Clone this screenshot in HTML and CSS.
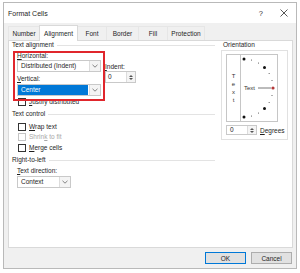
FILE: index.html
```html
<!DOCTYPE html>
<html lang="en">
<head>
    <meta charset="UTF-8">
    <title>Format Cells</title>
    <link rel="stylesheet" href="styles.css">
</head>
<body>
    <div class="dialog">
        <div class="titlebar">
            <span class="title">Format Cells</span>
            <div class="tb-btns">
                <span class="help">?</span>
                <svg class="close" width="8" height="8" viewBox="0 0 8 8"><path d="M0.5 0.5L7.5 7.5M7.5 0.5L0.5 7.5" stroke="#444" stroke-width="0.9"/></svg>
            </div>
        </div>
        <div class="dlg-body">
            <!-- Abas -->
            <div class="tabs">
                <div class="tab w-number">Number</div>
                <div class="tab active w-align">Alignment</div>
                <div class="tab w-font">Font</div>
                <div class="tab w-border">Border</div>
                <div class="tab w-fill">Fill</div>
                <div class="tab w-prot">Protection</div>
            </div>
            <div class="panel">
                <div class="left-col">
                    <div class="group-head"><span>Text alignment</span></div>
                    <div class="align-row">
                        <div class="hv">
                            <div class="lbl"><u>H</u>orizontal:</div>
                            <div class="combo">
                                <span class="combo-text">Distributed (Indent)</span>
                                <span class="combo-btn"><svg width="6" height="4" viewBox="0 0 6 4"><path d="M0.5 0.8L3 3.2L5.5 0.8" fill="none" stroke="#666" stroke-width="0.8"/></svg></span>
                            </div>
                            <div class="lbl lbl-v"><u>V</u>ertical:</div>
                            <div class="combo combo-v">
                                <span class="combo-text selected">Center</span>
                                <span class="combo-btn"><svg width="6" height="4" viewBox="0 0 6 4"><path d="M0.5 0.8L3 3.2L5.5 0.8" fill="none" stroke="#666" stroke-width="0.8"/></svg></span>
                            </div>
                        </div>
                        <div class="indent">
                            <div class="lbl"><u>I</u>ndent:</div>
                            <div class="spin">
                                <span class="spin-val">0</span>
                                <span class="spin-btn"><span class="up"></span><span class="down"></span></span>
                            </div>
                        </div>
                    </div>
                    <div class="check check-justify"><span class="box"></span><span><u>J</u>ustify distributed</span></div>

                    <div class="group-head gh-control"><span>Text control</span></div>
                    <div class="check check-wrap"><span class="box"></span><span><u>W</u>rap text</span></div>
                    <div class="check check-shrink disabled"><span class="box"></span><span>Shrin<u>k</u> to fit</span></div>
                    <div class="check check-merge"><span class="box"></span><span><u>M</u>erge cells</span></div>

                    <div class="group-head gh-rtl"><span>Right-to-left</span></div>
                    <div class="lbl lbl-dir"><u>T</u>ext direction:</div>
                    <div class="combo combo-ctx">
                        <span class="combo-text">Context</span>
                        <span class="combo-btn"><svg width="6" height="4" viewBox="0 0 6 4"><path d="M0.5 0.8L3 3.2L5.5 0.8" fill="none" stroke="#666" stroke-width="0.8"/></svg></span>
                    </div>
                </div>

                <div class="right-col">
                    <div class="orient-head">Orientation</div>
                    <div class="orient-box">
                        <div class="orient-row">
                            <div class="vtext">
                                <span>T</span><span>e</span><span>x</span><span>t</span>
                            </div>
                            <div class="dial">
                                <svg width="35" height="66" viewBox="0 0 35 66">
                                    <circle cx="2" cy="4" r="1.5" fill="#111"/>
                                    <circle cx="9.5" cy="5" r="0.5" fill="#333"/>
                                    <circle cx="16.5" cy="7.9" r="0.5" fill="#333"/>
                                    <circle cx="22.5" cy="12.5" r="1.5" fill="#111"/>
                                    <circle cx="27.1" cy="18.5" r="0.5" fill="#333"/>
                                    <circle cx="30" cy="25.5" r="0.5" fill="#333"/>
                                    <circle cx="31" cy="33" r="1.6" fill="#b5393a"/>
                                    <circle cx="30" cy="40.5" r="0.5" fill="#333"/>
                                    <circle cx="27.1" cy="47.5" r="0.5" fill="#333"/>
                                    <circle cx="22.5" cy="53.5" r="1.5" fill="#111"/>
                                    <circle cx="16.5" cy="58.1" r="0.5" fill="#333"/>
                                    <circle cx="9.5" cy="61" r="0.5" fill="#333"/>
                                    <circle cx="2" cy="62" r="1.5" fill="#111"/>
                                    <text x="2" y="35" class="dial-text">Text</text>
                                    <line x1="16" y1="33" x2="29" y2="33" stroke="#555" stroke-width="0.8"/>
                                </svg>
                            </div>
                        </div>
                        <div class="deg-row">
                            <div class="spin spin-deg">
                                <span class="spin-val">0</span>
                                <span class="spin-btn"><span class="up"></span><span class="down"></span></span>
                            </div>
                            <span class="deg-lbl"><u>D</u>egrees</span>
                        </div>
                    </div>
                </div>

                <!-- destaque vermelho -->
                <div class="redbox"></div>
            </div>
            <div class="footer">
                <button class="btn btn-ok">OK</button>
                <button class="btn">Cancel</button>
            </div>
        </div>
    </div>
</body>
</html>
```

FILE: styles.css
```css
/* Estilos gerais */
body {
    margin: 0;
    background: #fff;
    font-family: "Liberation Sans", Arial, sans-serif;
    font-size: 6.5px;
    color: #1e1e1e;
}
u {
    text-decoration-thickness: 0.5px;
    text-underline-offset: 1px;
}
.dialog {
    margin: 2px 0 0 3px;
    width: 294px;
    height: 267px;
    box-sizing: border-box;
    border: 1px solid #b9b9b9;
    display: flex;
    flex-direction: column;
}
.titlebar {
    height: 20px;
    background: #fff;
    display: flex;
    align-items: center;
    justify-content: space-between;
    padding: 0 8px 0 4px;
}
.title {
    font-size: 7px;
}
.tb-btns {
    display: flex;
    align-items: center;
    gap: 17px;
}
.help {
    font-size: 7.5px;
    color: #333;
}
.dlg-body {
    flex: 1;
    background: #f0f0f0;
    padding: 0 3px 0 4px;
    display: flex;
    flex-direction: column;
}
/* Abas */
.tabs {
    display: flex;
    align-items: flex-end;
    height: 17px;
}
.tab {
    height: 14px;
    box-sizing: border-box;
    border: 1px solid #e6e6e6;
    border-bottom: none;
    margin-left: -1px;
    display: flex;
    align-items: center;
    justify-content: center;
    background: #f0f0f0;
}
.tab:first-child {
    margin-left: 0;
}
.tab.active {
    height: 16px;
    background: #fff;
    border-color: #d9d9d9;
    margin-bottom: -1px;
    position: relative;
    z-index: 1;
}
.w-number { width: 32px; }
.w-align { width: 39px; }
.w-font { width: 30px; }
.w-border { width: 33px; }
.w-fill { width: 30px; }
.w-prot { width: 38px; }
/* Painel */
.panel {
    height: 208px;
    box-sizing: border-box;
    background: #fff;
    border: 1px solid #d9d9d9;
    display: flex;
    padding: 0 0 0 3px;
    position: relative;
}
.left-col {
    width: 203px;
    display: flex;
    flex-direction: column;
}
.group-head {
    height: 8px;
    line-height: 8px;
    display: flex;
    align-items: center;
    gap: 3px;
}
.group-head::after {
    content: "";
    flex: 1;
    border-top: 1px solid #e3e3e3;
}
.gh-control { margin-top: 4px; }
.gh-rtl { margin-top: 4px; }
.lbl {
    height: 9px;
    line-height: 9px;
}
.align-row {
    display: flex;
    margin-top: 2px;
    margin-left: 5px;
}
.hv {
    width: 84px;
    display: flex;
    flex-direction: column;
}
.lbl-v { margin-top: 2px; }
.combo {
    height: 12px;
    box-sizing: border-box;
    border: 1px solid #c9c9c9;
    background: #fff;
    display: flex;
    align-items: stretch;
}
.combo-v { margin-top: 1px; }
.combo-text {
    flex: 1;
    line-height: 10px;
    padding-left: 3px;
}
.combo-text.selected {
    background: #0078d7;
    color: #fff;
    margin: 0 1px 0 0;
}
.combo-btn {
    width: 10px;
    border-left: 1px solid #dcdcdc;
    background: #f4f4f4;
    display: flex;
    align-items: center;
    justify-content: center;
}
.indent {
    margin-left: 4px;
    margin-top: 11px;
}
.spin {
    width: 31px;
    height: 12px;
    box-sizing: border-box;
    border: 1px solid #c9c9c9;
    display: flex;
    background: #fff;
}
.spin-val {
    flex: 1;
    line-height: 10px;
    padding-left: 2px;
}
.spin-btn {
    width: 8px;
    border-left: 1px solid #dcdcdc;
    background: #f4f4f4;
    display: flex;
    flex-direction: column;
    align-items: center;
    justify-content: center;
    gap: 1px;
}
.up, .down {
    width: 0;
    height: 0;
    border-left: 2px solid transparent;
    border-right: 2px solid transparent;
}
.up { border-bottom: 2px solid #555; }
.down { border-top: 2px solid #555; }
/* Caixas de seleção */
.check {
    height: 9px;
    display: flex;
    align-items: center;
    gap: 3px;
    margin-left: 6px;
}
.box {
    width: 8px;
    height: 8px;
    box-sizing: border-box;
    border: 1px solid #333;
    background: #fff;
}
.check-justify { margin-top: 1px; }
.check-wrap { margin-top: 4px; }
.check-shrink { margin-top: 1px; }
.check-merge { margin-top: 2px; }
.disabled { color: #a8a8a8; }
.disabled .box { border-color: #c4c4c4; }
.lbl-dir { margin-top: 2px; margin-left: 5px; }
.combo-ctx {
    width: 54px;
    margin-top: 1px;
    margin-left: 5px;
}
/* Orientação */
.right-col {
    margin-left: 6px;
    width: 67px;
}
.orient-head {
    height: 8px;
    line-height: 8px;
    padding-left: 2px;
}
.orient-box {
    height: 90px;
    box-sizing: border-box;
    border: 1px solid #e1e1e1;
    margin-top: 1px;
    padding: 3px 0 0 4px;
}
.orient-row {
    display: flex;
}
.vtext {
    width: 15px;
    height: 68px;
    box-sizing: border-box;
    border: 1px solid #c6c6c6;
    display: flex;
    flex-direction: column;
    align-items: center;
    justify-content: center;
    font-size: 6px;
    line-height: 8px;
    color: #333;
}
.dial {
    width: 37px;
    height: 68px;
    box-sizing: border-box;
    border: 1px solid #c6c6c6;
    border-left: none;
}
.dial svg {
    display: block;
    margin-left: 1px;
}
.dial-text {
    font-family: "Liberation Sans", Arial, sans-serif;
    font-size: 6px;
    fill: #333;
}
.deg-row {
    display: flex;
    align-items: center;
    margin-top: 3px;
    gap: 3px;
}
.spin-deg {
    height: 10px;
}
.spin-deg .spin-val {
    line-height: 8px;
    padding-left: 3px;
}
/* Destaque */
.redbox {
    position: absolute;
    left: 4px;
    top: 10px;
    width: 92px;
    height: 50px;
    box-sizing: border-box;
    border: 2px solid #e0262c;
}
/* Rodapé */
.footer {
    flex: 1;
    display: flex;
    justify-content: flex-end;
    align-items: center;
    gap: 5px;
    padding-right: 1px;
}
.btn {
    width: 41px;
    height: 12px;
    box-sizing: border-box;
    border: 1px solid #adadad;
    background: #e1e1e1;
    font-family: "Liberation Sans", Arial, sans-serif;
    font-size: 6.5px;
    color: #1e1e1e;
    padding: 0;
}
.btn-ok {
    border-color: #0078d7;
}
```
